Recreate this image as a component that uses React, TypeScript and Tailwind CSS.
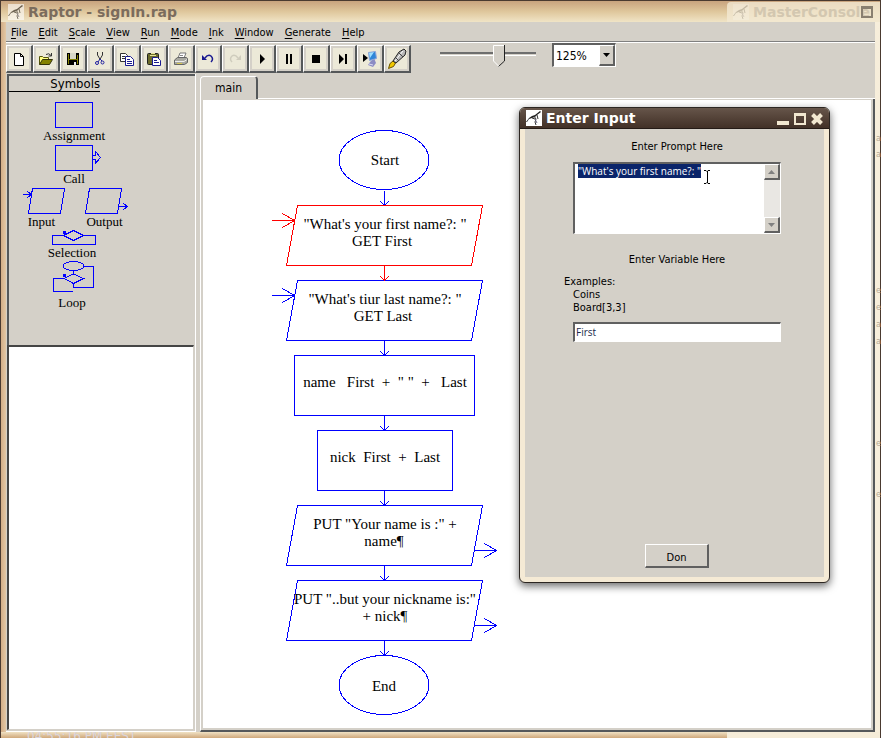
import React, { ReactNode, useEffect, useRef, useState } from "react";

const menus = ["File", "Edit", "Scale", "View", "Run", "Mode", "Ink", "Window", "Generate", "Help"];

const BLUE = "#0000ff";
const RED = "#ff0000";

const Bird = ({ className }: { className: string }) => (
  <svg className={className} viewBox="0 0 16 16" fill="none">
    <rect width="16" height="16" fill="#fff" />
    <path d="M0 12l3-4 3-2 3-1 5-4 1 1-4 3-2 2-3 1-3 1-2 3z" fill="#222" />
    <path d="M8 6l2 3-1 3 1 3M6 8l3 1M11 5l1 4" stroke="#333" />
    <path d="M9 9l2 4" stroke="#6b6a86" />
  </svg>
);

const icons: { name: string; art: ReactNode }[] = [
  {
    name: "New",
    art: <path d="M3.500 2.500h6l3 3v9h-9zM9.500 2.500v3h3" fill="#fff" stroke="#000" />,
  },
  {
    name: "Open",
    art: (
      <>
        <path d="M1.500 13.500v-8h3l1 1h5v2" fill="#ffff80" stroke="#55550a" />
        <path d="M1.500 13.500l3-5h10l-3 5z" fill="#848200" stroke="#33330a" />
        <path d="M8 3.500q3-2 5 1M13.500 2v3h-3" stroke="#333" />
      </>
    ),
  },
  {
    name: "Save",
    art: (
      <>
        <rect x="2" y="2" width="12" height="12" fill="#000" />
        <rect x="3" y="3" width="1" height="10" fill="#848200" />
        <rect x="12" y="4" width="1" height="9" fill="#848200" />
        <rect x="5" y="2" width="6" height="6" fill="#d8d8c8" />
        <rect x="4" y="8" width="8" height="1" fill="#848200" />
        <rect x="9" y="11" width="2" height="3" fill="#eee" />
      </>
    ),
  },
  {
    name: "Cut",
    art: (
      <>
        <path d="M5.500 1v3l3 5M10.500 1v3l-3 5" stroke="#333" />
        <circle cx="5" cy="12" r="1.500" stroke="#2020a0" />
        <circle cx="10.500" cy="11.500" r="1.500" stroke="#2020a0" />
        <path d="M6 11l2-3 2 2" stroke="#2020a0" />
      </>
    ),
  },
  {
    name: "Copy",
    art: (
      <>
        <path d="M1.500 2.500h5l2 2v6h-7z" fill="#fff" stroke="#333" />
        <path d="M3 5.500h3M3 7.500h4" stroke="#333" />
        <path d="M6.500 5.500h5l3 3v6h-8z" fill="#fff" stroke="#1a1a90" />
        <path d="M8 8.500h3M8 10.500h5M8 12.500h5" stroke="#1a1a90" />
      </>
    ),
  },
  {
    name: "Paste",
    art: (
      <>
        <rect x="1.500" y="2.500" width="11" height="11" rx="1" fill="#6b6b2b" stroke="#222" />
        <path d="M4 4.500h6M5 2.500h4" stroke="#e6e39a" />
        <path d="M6.500 6.500h5l3 3v5h-8z" fill="#fff" stroke="#1a1a90" />
        <path d="M8 9.500h3M8 11.500h5" stroke="#1a1a90" />
      </>
    ),
  },
  {
    name: "Print",
    art: (
      <>
        <path d="M5 7l2-5h6l-2 5z" fill="#fff" stroke="#777" />
        <path d="M1.500 9l3-2.500h9l1 1v4l-3 2h-10z" fill="#a8a8a0" stroke="#666" />
        <path d="M2 10.500h9l3-2" stroke="#eee" />
        <path d="M4 12.500h5" stroke="#d8c850" />
        <path d="M7 4.500h3" stroke="#888" />
      </>
    ),
  },
  {
    name: "Undo",
    art: (
      <>
        <path d="M5 7q3-4 6-2 3 3 0 6" stroke="#1a1a90" strokeWidth="1.500" />
        <path d="M2 4v5h5z" fill="#1a1a90" />
      </>
    ),
  },
  {
    name: "Redo",
    art: (
      <>
        <path d="M11 7Q8 3 5 5q-3 3 0 6" stroke="#cfccbd" strokeWidth="1.500" />
        <path d="M14 4v5H9z" fill="#cfccbd" />
      </>
    ),
  },
  { name: "Play", art: <path d="M6 3l5 5-5 5z" fill="#000" /> },
  { name: "Pause", art: <path d="M5 3h2v10H5zM9 3h2v10H9z" fill="#000" /> },
  { name: "Stop", art: <path d="M4 4h8v8H4z" fill="#000" /> },
  { name: "Step", art: <path d="M4 3l5 5-5 5zM10 3h2v10h-2z" fill="#000" /> },
  {
    name: "Test server",
    art: (
      <>
        <path d="M1 3l5 4-5 4z" fill="#000" />
        <path d="M12 7l2 5-3 4-5-2 2-3z" fill="#8c8cc4" />
        <path d="M6.500 1.500l7-1 1 7-7 2z" fill="#2f86d8" stroke="#8fa6d8" />
        <path d="M7 2l5-1-4 6z" fill="#9fe0ff" />
        <path d="M7 13l4 1" stroke="#dcdcf4" />
      </>
    ),
  },
  {
    name: "Pen",
    art: (
      <>
        <path d="M-.5 17.500l1.500-5 3-2.500 2.500 2-2 3.500z" fill="#f0c800" stroke="#6b5200" />
        <path d="M4 10l6-9 5-3 2 2-1 4-9 8z" fill="#b8b8b8" stroke="#222" />
        <path d="M6 10l8-10" stroke="#fff" />
        <path d="M10 2l4 4M7 7l3 3" stroke="#444" />
      </>
    ),
  },
];

const TitleBar = () => (
  <header className="flex h-[21px] items-center bg-linear-to-b from-[#c8a37e] via-[#dfc79c] to-[#f0e4c6]">
    <Bird className="ml-[7px] h-4 w-4 opacity-60" />
    <h1 className="ml-1 flex-1 font-['DejaVu_Sans'] text-[14px] leading-5 font-bold text-[#7b6c5d]">
      Raptor - signIn.rap
    </h1>
    <div className="relative flex h-5 w-[153px] items-center self-end rounded-tl bg-[#f3e9d2]/80">
      <Bird className="ml-1.5 h-4 w-4 opacity-20" />
      <span className="ml-1 font-['DejaVu_Sans'] text-[14px] leading-5 font-bold text-[#d3c7b0]">
        MasterConsole
      </span>
      <button
        aria-label="Maximize"
        className="absolute top-1 right-[7px] h-3 w-3 border-2 border-t-3 border-[#897f70]"
      />
    </div>
  </header>
);

const MenuBar = () => (
  <nav className="flex h-5 items-end gap-[11px] border-b border-[#808080] pl-[5px] text-[11px] leading-4">
    {menus.map((m) => (
      <button key={m}>
        <span className="underline underline-offset-2">{m[0]}</span>
        {m.slice(1)}
      </button>
    ))}
  </nav>
);

const Toolbar = () => {
  const [pos, setPos] = useState(61);
  return (
    <div className="flex h-8 items-start border-t border-white">
      <div className="flex pt-0.5">
        {icons.map((icon) => (
          <button
            key={icon.name}
            aria-label={icon.name}
            className="flex h-7 w-[27px] border-t border-r-2 border-b-2 border-l border-t-white border-r-[#55585a] border-b-[#55585a] border-l-white p-0.5"
          >
            <span className="flex h-full w-full items-center justify-center bg-[#ece9d8]">
              <svg className="h-4 w-4 overflow-visible" viewBox="0 0 16 16" fill="none">
                {icon.art}
              </svg>
            </span>
          </button>
        ))}
      </div>
      <div className="relative ml-[29px] h-6 w-24">
        <div className="mt-[9px] h-1 border-t-2 border-b border-t-[#6e6e6e] border-b-white" />
        <svg
          className="absolute top-0.5 h-[22px] w-3 -translate-x-1/2"
          style={{ left: `${pos}%` }}
          viewBox="0 0 12 22"
          fill="none"
        >
          <path d="M0 0h12v16l-6 6-6-6z" fill="#d4d0c8" />
          <path d="M11.500 0v16l-6 5.500" stroke="#222" />
          <path d="M11 .5H.5V16l5.500 5.500" stroke="#fff" />
        </svg>
        <input
          type="range"
          aria-label="Speed"
          value={pos}
          onChange={(e) => setPos(Number(e.target.value))}
          className="absolute inset-0 w-full opacity-0"
        />
      </div>
      <div className="relative ml-4 h-6 w-16 border-t-2 border-r border-b border-l-2 border-t-[#606060] border-r-white border-b-white border-l-[#606060]">
        <select
          aria-label="Zoom"
          defaultValue="125%"
          className="block h-full w-full appearance-none bg-white pl-0.5 text-[12px] leading-5 outline-none"
        >
          <option>100%</option>
          <option>125%</option>
          <option>150%</option>
        </select>
        <span className="pointer-events-none absolute inset-y-0 right-0 flex w-4 items-center justify-center border-t border-r-2 border-b-2 border-l border-t-white border-r-[#606060] border-b-[#606060] border-l-white bg-[#d4d0c8]">
          <svg className="h-1 w-[7px]" viewBox="0 0 7 4">
            <path d="M0 0h7L3.500 4z" />
          </svg>
        </span>
      </div>
    </div>
  );
};

interface SymbolProps {
  label: string;
  box: string;
  size: string;
  labelClass?: string;
  children: ReactNode;
}

const SymbolItem = ({ label, box, size, labelClass = "", children }: SymbolProps) => (
  <button className="flex flex-col items-center">
    <svg className={size} viewBox={box} fill="none" stroke={BLUE} shapeRendering="crispEdges">
      {children}
    </svg>
    <span className={`font-['Liberation_Serif',serif] text-[13px] leading-4 ${labelClass}`}>{label}</span>
  </button>
);

const SymbolPanel = () => (
  <section className="h-[271px] border-t-2 border-l-2 border-[#55585a]">
    <h2 className="flex h-4 w-[91px] justify-end border-b border-black text-[13px] leading-4">
      Symbols
    </h2>
    <div className="flex w-[130px] flex-col items-center pt-2.5">
      <SymbolItem label="Assignment" box="0 0 38 26" size="h-[26px] w-[38px]" labelClass="mb-px">
        <rect x=".5" y=".5" width="37" height="25" />
      </SymbolItem>
      <SymbolItem label="Call" box="-9 0 56 26" size="h-[26px] w-14" labelClass="mb-px">
        <rect x=".5" y=".5" width="37" height="25" />
        <path d="M37.500 10.500h3v-4l5 6-5 6v-4h-3z" />
      </SymbolItem>
      <div className="flex gap-[19px] pl-0.5">
        <SymbolItem label="Input" box="0 0 44 26" size="h-[26px] w-11" labelClass="mr-1">
          <path d="M10.500.5h32l-4 25h-32zM.5 6.500h9M5.500 3.500l4 3-4 3" />
        </SymbolItem>
        <SymbolItem label="Output" box="0 0 44 26" size="h-[26px] w-11" labelClass="mr-1">
          <path d="M4.500.5h32l-4 25H.5zM34 18.500h9M38.500 15.500l4 3-4 3" />
        </SymbolItem>
      </div>
      <SymbolItem label="Selection" box="0 0 44 15" size="h-[15px] w-11" labelClass="mr-1">
        <path d="M11.500 5.500H.5v9h43v-9h-11M11.500 5.500l10-5 10 5-10 5z" />
        <rect x="11" y="1" width="3" height="3" fill={BLUE} stroke="none" />
      </SymbolItem>
      <SymbolItem label="Loop" box="0 0 42 32" size="h-8 w-[42px]" labelClass="mt-0.5 mr-1">
        <ellipse cx="20.500" cy="5" rx="10.500" ry="4.500" />
        <path d="M31 5.500h9.500v21h-20v-4M20.500 9v5M11 17.500l9.500-4.500 10 4.500-10 5zM11.500 17.500H.5v13h19" />
        <rect x="10" y="13" width="3" height="3" fill={BLUE} stroke="none" />
      </SymbolItem>
    </div>
  </section>
);

const Flow = ({ y, color = BLUE }: { y: number; color?: string }) => (
  <path d={`M384 ${y}v15m-4-4l4 4 4-4`} stroke={color} />
);

const Slant = ({ y, color = BLUE, arrow }: { y: number; color?: string; arrow: "in" | "out" }) => (
  <g stroke={color}>
    <path d={`M297 ${y}h185l-11 60h-185z`} />
    {arrow === "in" ? (
      <path d={`M271 ${y + 15}h23m-12-7l12 7-12 7`} />
    ) : (
      <path d={`M474 ${y + 45}h22m-12-7l12 7-12 7`} />
    )}
  </g>
);

const captions = [
  { x: 385, y: 165, text: "Start" },
  { x: 385, y: 229, text: "\"What's your first name?: \"" },
  { x: 382, y: 246, text: "GET First" },
  { x: 385, y: 304, text: "\"What's tiur last name?: \"" },
  { x: 383, y: 321, text: "GET Last" },
  { x: 385, y: 387, text: "name   First  +  \" \"  +   Last" },
  { x: 385, y: 462, text: "nick  First  +  Last" },
  { x: 385, y: 529, text: "PUT \"Your name is :\" +" },
  { x: 384, y: 546, text: "name¶" },
  { x: 385, y: 604, text: "PUT \"..but your nickname is:\"" },
  { x: 385, y: 621, text: "+ nick¶" },
  { x: 384, y: 691, text: "End" },
];

const Flowchart = () => (
  <svg className="block h-[628px] w-[320px]" viewBox="203 100 320 628">
    <g transform="translate(.5 .5)" fill="none" stroke={BLUE} shapeRendering="crispEdges">
      <ellipse cx="383.500" cy="159.500" rx="45" ry="29.500" />
      <Flow y={190} />
      <Slant y={280} arrow="in" />
      <Slant y={205} color={RED} arrow="in" />
      <Flow y={265} color={RED} />
      <Flow y={340} />
      <rect x="294" y="355" width="180" height="60" />
      <Flow y={415} />
      <rect x="317" y="430" width="135" height="60" />
      <Flow y={490} />
      <Slant y={505} arrow="out" />
      <Flow y={565} />
      <Slant y={580} arrow="out" />
      <Flow y={640} />
      <ellipse cx="383.500" cy="684.500" rx="45" ry="29.500" />
    </g>
    <g className="font-['Liberation_Serif',serif] text-[15px]" textAnchor="middle">
      {captions.map((c) => (
        <text key={c.y} x={c.x} y={c.y} className="whitespace-pre">
          {c.text}
        </text>
      ))}
    </g>
  </svg>
);

const ScrollButton = ({ label, d }: { label: string; d: string }) => (
  <button
    aria-label={label}
    className="flex h-4 w-4 items-center justify-center border-t border-r-2 border-b-2 border-l border-t-white border-r-[#606060] border-b-[#606060] border-l-white bg-[#d4d0c8]"
  >
    <svg className="h-1 w-[7px]" viewBox="0 0 7 4" fill="#808080">
      <path d={d} />
    </svg>
  </button>
);

const InputDialog = () => {
  const promptRef = useRef<HTMLTextAreaElement>(null);
  const [prompt, setPrompt] = useState("\"What's your first name?: \"");
  const [variable, setVariable] = useState("First");

  useEffect(() => {
    promptRef.current?.focus();
    promptRef.current?.select();
  }, []);

  return (
    <div
      role="dialog"
      aria-label="Enter Input"
      className="absolute top-[107px] left-[519px] w-[311px] overflow-hidden rounded-md border border-[#2c2622] bg-[#f5ead5] shadow-[0_3px_9px_rgba(0,0,0,0.6)]"
    >
      <div className="flex h-[21px] items-center border-b border-[#241b16] bg-linear-to-b from-[#66554a] to-[#423127] pr-1.5 pl-1.5">
        <Bird className="h-4 w-4" />
        <h2 className="ml-1 flex-1 font-['DejaVu_Sans'] text-[14px] leading-5 font-bold text-white">
          Enter Input
        </h2>
        <button aria-label="Minimize" className="mt-2.5 h-1 w-3 bg-[#f1e7d0]" />
        <button aria-label="Maximize" className="mt-0.5 ml-[5px] h-3 w-3 border-2 border-t-3 border-[#f1e7d0]" />
        <button aria-label="Close" className="mt-0.5 ml-[5px]">
          <svg className="block h-3 w-3" viewBox="0 0 12 12" stroke="#f1e7d0" strokeWidth="4">
            <path d="M1.500 1.500l9 9M10.500 1.500l-9 9" />
          </svg>
        </button>
      </div>
      <form
        className="mx-[5px] mb-[5px] flex h-[448px] flex-col bg-[#d4d0c8] pt-[11px] pr-[43px] pb-[9px] pl-12 text-[11px] leading-[13px]"
        onSubmit={(e) => e.preventDefault()}
      >
        <label htmlFor="prompt" className="text-center">
          Enter Prompt Here
        </label>
        <div className="relative mt-[9px] flex h-[72px] border-t-2 border-r border-b border-l-2 border-t-[#606060] border-r-white border-b-white border-l-[#606060] bg-white">
          <textarea
            id="prompt"
            ref={promptRef}
            value={prompt}
            onChange={(e) => setPrompt(e.target.value)}
            spellCheck={false}
            className="min-w-0 flex-1 resize-none overflow-hidden pl-[3px] font-['Open_Sans'] text-[10px] leading-[14px] caret-transparent outline-none selection:bg-[#0a246a] selection:text-white"
          />
          <div className="flex w-4 flex-col justify-between bg-[#e9e7e3]">
            <ScrollButton label="Scroll up" d="M0 4h7L3.500 0z" />
            <ScrollButton label="Scroll down" d="M0 0h7L3.500 4z" />
          </div>
          <svg className="absolute top-1 left-[127px] h-[18px] w-2.5" viewBox="0 0 10 18" fill="none">
            <path d="M1 2h3l1 1 1-1h3M5 3v12M1 16h3l1-1 1 1h3" stroke="#fff" strokeWidth="3" />
            <path d="M2 2.500h2l1 1 1-1h2M5.500 3v12M2 15.500h2l1-1 1 1h2" stroke="#000" />
          </svg>
        </div>
        <label htmlFor="variable" className="mt-[19px] text-center">
          Enter Variable Here
        </label>
        <p className="-ml-[9px] pt-[9px]">Examples:</p>
        <p>Coins</p>
        <p>Board[3,3]</p>
        <input
          id="variable"
          value={variable}
          onChange={(e) => setVariable(e.target.value)}
          className="mt-2 h-5 w-full border-t-2 border-r border-b border-l-2 border-t-[#606060] border-r-white border-b-white border-l-[#606060] bg-white pb-0.5 pl-px font-['Open_Sans'] text-[10px] leading-4 text-[#1a2b4a] outline-none"
        />
        <button className="mt-auto h-6 w-16 self-center border-t border-r-2 border-b-2 border-l border-t-white border-r-[#606060] border-b-[#606060] border-l-white pt-1">
          Don
        </button>
      </form>
    </div>
  );
};

// letters of the window behind that show through the right border
const behind = [
  { top: "top-[133px]", ch: "a" },
  { top: "top-[149px]", ch: "a" },
  { top: "top-[285px]", ch: "e" },
  { top: "top-[302px]", ch: "e" },
  { top: "top-[319px]", ch: "a" },
  { top: "top-[336px]", ch: "a" },
  { top: "top-[438px]", ch: "e" },
  { top: "top-[489px]", ch: "e" },
];

export default function App() {
  return (
    <div className="relative flex min-h-screen flex-col overflow-hidden bg-[#4a3a30] pt-px pr-px pl-px font-['DejaVu_Sans_Condensed','DejaVu_Sans',sans-serif] text-black">
      <TitleBar />
      <div className="flex flex-1 bg-linear-to-r from-[#d2ad87] via-[#efdcbc] via-1% to-[#f7eedb] pr-[5px] pl-[5px]">
        <div className="flex min-w-0 flex-1 flex-col bg-[#d4d0c8]">
          <MenuBar />
          <Toolbar />
          <div className="flex flex-1">
            <aside className="flex w-[190px] flex-col border-r border-b border-white pl-px">
              <SymbolPanel />
              <div className="mr-px mb-px flex-1 border-t-2 border-r border-b border-l-2 border-t-[#454545] border-r-[#d4d0c8] border-b-[#d4d0c8] border-l-[#454545] bg-white" />
            </aside>
            <main className="ml-1 flex min-w-0 flex-1 flex-col pt-0.5">
              <div className="flex h-[23px]">
                <button className="w-[58px] rounded-t-sm border-t border-r-2 border-l border-t-white border-r-[#55585a] border-l-white text-[12px]">
                  main
                </button>
                <div className="flex-1 border-b border-white" />
              </div>
              <div className="flex-1 border-r-2 border-b-2 border-l border-r-[#55585a] border-b-[#55585a] border-l-white">
                <div className="h-full overflow-hidden border-2 border-t border-[#d4d0c8] bg-white">
                  <Flowchart />
                </div>
              </div>
            </main>
          </div>
        </div>
      </div>
      <footer className="flex h-[7px] overflow-hidden border-b border-[#5a4028] bg-linear-to-b from-[#f0e2c4] to-[#cfa87b]">
        <span className="ml-[26px] flex-1 font-['DejaVu_Sans'] text-[12px] leading-[9px] text-[#d9d4dc]">
          04:55:16 PM EEST
        </span>
        <span className="w-[153px] bg-[#f5ecd8]" />
      </footer>
      {behind.map((b) => (
        <span
          key={b.top}
          aria-hidden
          className={`absolute right-0 font-['DejaVu_Sans'] text-[8px] leading-3 text-[#b5aa97] ${b.top}`}
        >
          {b.ch}
        </span>
      ))}
      <InputDialog />
    </div>
  );
}
